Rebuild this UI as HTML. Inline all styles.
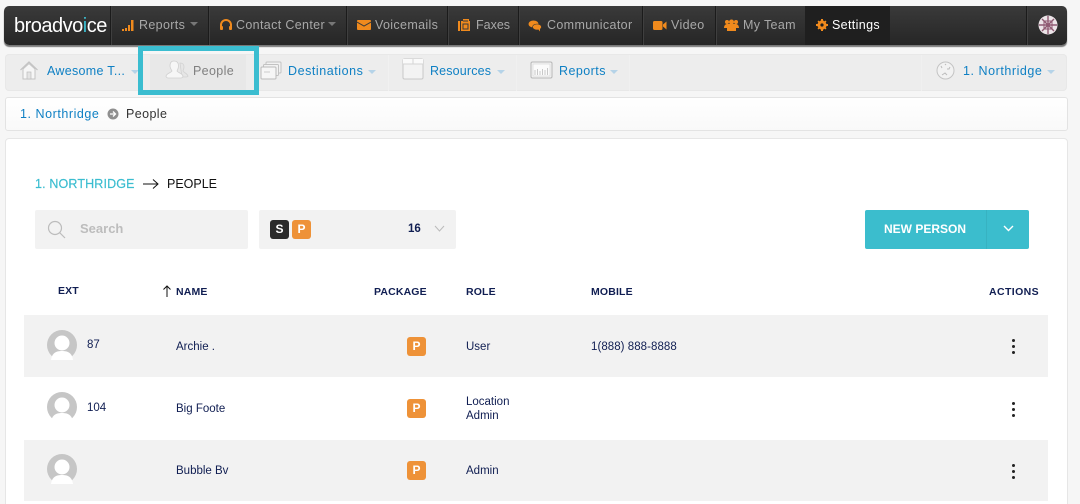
<!DOCTYPE html>
<html>
<head>
<meta charset="utf-8">
<style>
html,body{margin:0;padding:0;background:#f6f6f6;width:1080px;height:504px;overflow:hidden;}
#w{width:1080px;height:504px;position:relative;overflow:hidden;font-family:"Liberation Sans",sans-serif;}
.a{position:absolute;white-space:nowrap;}
#top{position:absolute;left:4px;top:6px;width:1063px;height:39px;background:linear-gradient(#3a3a3a,#262626);border-radius:5px;box-shadow:0 2px 1px #777;}
.sep{position:absolute;top:6px;width:1px;height:39px;background:#1b1b1b;box-shadow:1px 0 0 #3f3f3f;}
.t{position:absolute;top:17px;font-size:12.5px;line-height:16px;color:#a8a8a8;white-space:nowrap;letter-spacing:.35px;}
.car{position:absolute;width:0;height:0;border-left:4px solid transparent;border-right:4px solid transparent;}
.car.d{border-top:4px solid #777;top:22px;}
.car.b{border-top:4px solid #b5d3e8;top:70px;}
.s{position:absolute;top:63px;font-size:12.5px;line-height:16px;color:#0f80c4;white-space:nowrap;letter-spacing:.4px;}
.hd{position:absolute;font-size:10.5px;font-weight:bold;line-height:12px;color:#101e52;white-space:nowrap;letter-spacing:.15px;}
.c{position:absolute;font-size:11.5px;line-height:14px;color:#101e52;white-space:nowrap;}
.row{position:absolute;left:24px;width:1024px;background:#f2f2f2;}
.p{position:absolute;width:19px;height:19px;background:#ee9238;border-radius:3px;color:#fff;font-weight:bold;font-size:12px;line-height:19px;text-align:center;}
.dots{position:absolute;left:1012px;width:3px;}
.dots i{display:block;width:3px;height:3px;border-radius:50%;background:#222;margin-bottom:2.8px;}
svg{position:absolute;overflow:hidden;}
</style>
</head>
<body>
<div id="w">
<div id="top"></div>
<div class="a" style="left:805px;top:6px;width:85px;height:39px;background:#1f1f1f;"></div>
<div class="sep" style="left:110px"></div>
<div class="sep" style="left:208px"></div>
<div class="sep" style="left:346px"></div>
<div class="sep" style="left:447px"></div>
<div class="sep" style="left:518px"></div>
<div class="sep" style="left:642px"></div>
<div class="sep" style="left:715px"></div>
<div class="sep" style="left:1026px"></div>

<div class="a" style="left:14px;top:13px;font-size:20px;line-height:26px;color:#fff;letter-spacing:-.5px;">broadvo<span style="color:#3bbdd0">i</span>ce</div>

<svg style="left:121px;top:18px" width="14" height="14"><path d="M1 11h2v2H1zM4 10h2v3H4zM7 7h2v6H7zM10 2h2.500v11H10z" fill="#f08a1d"/></svg>
<div class="t" style="left:139px">Reports</div><div class="car d" style="left:190px"></div>

<svg style="left:219px;top:18px" width="14" height="14"><path d="M2 9V7a5 5 0 0 1 10 0v2" fill="none" stroke="#f08a1d" stroke-width="2"/><rect x="1" y="8" width="3" height="4" rx="1" fill="#f08a1d"/><rect x="10" y="8" width="3" height="4" rx="1" fill="#f08a1d"/></svg>
<div class="t" style="left:236px">Contact Center</div><div class="car d" style="left:328px"></div>

<svg style="left:357px;top:19px" width="14" height="12"><rect x="0" y="1" width="14" height="10" rx="1" fill="#f08a1d"/><path d="M0 3l7 4 7-4" fill="none" stroke="#3a3a3a" stroke-width="1"/></svg>
<div class="t" style="left:375px">Voicemails</div>

<svg style="left:457px;top:18px" width="14" height="14"><path d="M1 3h2v10H1zM4 3h2V1h6v2h1v10H4z" fill="#f08a1d"/><path d="M6 3h5M6 6h5v5H6z" fill="none" stroke="#3a3a3a" stroke-width="1"/></svg>
<div class="t" style="left:476px;letter-spacing:0">Faxes</div>

<svg style="left:528px;top:19px" width="14" height="13"><ellipse cx="5.500" cy="5" rx="5" ry="3.500" fill="#f08a1d"/><ellipse cx="9" cy="8" rx="4.500" ry="3" fill="#f08a1d" stroke="#333" stroke-width=".6"/><path d="M10 10l2 2.500v-3z" fill="#f08a1d"/></svg>
<div class="t" style="left:547px">Communicator</div>

<svg style="left:653px;top:20px" width="14" height="11"><rect x="0" y="1" width="9.500" height="9" rx="1.500" fill="#f08a1d"/><path d="M10 4.500l3.500-3v8l-3.500-3z" fill="#f08a1d"/></svg>
<div class="t" style="left:671px">Video</div>

<svg style="left:724px;top:18px" width="15" height="14"><circle cx="3" cy="4" r="2" fill="#f08a1d"/><circle cx="12" cy="4" r="2" fill="#f08a1d"/><circle cx="7.500" cy="4" r="2.500" fill="#f08a1d"/><path d="M0 10c0-3 2-4 3-4h9c1 0 3 1 3 4h-3v3H3v-3z" fill="#f08a1d"/></svg>
<div class="t" style="left:743px">My Team</div>

<svg style="left:816px;top:19px" width="12" height="12"><circle cx="6" cy="6" r="4.600" fill="#f08a1d"/><circle cx="6" cy="6" r="1.600" fill="#1f1f1f"/><path d="M5 0h2v2H5zM5 10h2v2H5zM0 5h2v2H0zM10 5h2v2h-2zM1.500 2.500l1-1 1.500 1.500-1 1zM9.500 1.500l1 1-1.500 1.500-1-1zM1.500 9.500l1 1 1.500-1.500-1-1zM10.500 9.500l-1 1-1.500-1.500 1-1z" fill="#f08a1d"/></svg>
<div class="t" style="left:832px;color:#fff">Settings</div>

<svg style="left:1038px;top:15px" width="20" height="20"><circle cx="10" cy="10" r="9.500" fill="#ece4e8"/><path d="M10 1v18M1 10h18M4 4l12 12M16 4L4 16" stroke="#8f5a72" stroke-width="1.400"/><path d="M6 6h8v8H6z" fill="none" stroke="#8f5a72" stroke-width="1"/></svg>

<!-- sub nav -->
<div class="a" style="left:5px;top:54px;width:1062px;height:37px;background:#ededed;border-radius:4px;box-shadow:inset 0 0 0 1px #e8e8e8;"></div>
<div class="a" style="left:150px;top:55px;width:96px;height:36px;background:#e8e8e8;"></div>
<div class="a" style="left:388px;top:55px;width:1px;height:36px;background:#f1f1f1;"></div>
<div class="a" style="left:516px;top:55px;width:1px;height:36px;background:#f0f0f0;"></div>
<div class="a" style="left:629px;top:55px;width:1px;height:36px;background:#f0f0f0;"></div>
<div class="a" style="left:921px;top:55px;width:1px;height:36px;background:#f0f0f0;"></div>

<svg style="left:19px;top:60px" width="20" height="20"><path d="M1.500 10L10 2l8.500 8" fill="none" stroke="#c2c2c2" stroke-width="1.200"/><path d="M4 9v10h12V9L10 3.500z" fill="#f6f6f6" stroke="#c4c4c4"/><rect x="8" y="12" width="4" height="7" fill="#e4e4e4" stroke="#bdbdbd" stroke-width=".7"/></svg>
<div class="s" style="left:47px;letter-spacing:.3px">Awesome T...</div><div class="car b" style="left:131px"></div>

<svg style="left:165px;top:60px" width="24" height="20"><path d="M15 3c3 0 4 2 4 4 0 2-1 3-1 4 1 2 4 2 5 5 0 1-1 1-2 1h-4z" fill="#e6e6e6" stroke="#d2d2d2" stroke-width=".8"/><path d="M9 1c3 0 4.500 2 4.500 5 0 2-1 4-1.500 5 1 2 5 2 6 5 0 1-1 2-2 2H3c-1 0-2-1-2-2 1-3 5-3 6-5-.5-1-2-3-2-5 0-3 1-5 4-5z" fill="#f6f6f6" stroke="#cfcfcf" stroke-width=".8"/></svg>
<div class="s" style="left:193px;color:#808080;letter-spacing:.35px">People</div>

<svg style="left:260px;top:61px" width="22" height="19"><rect x="6" y="1" width="15" height="11" rx="1" fill="#f2f2f2" stroke="#c2c2c2"/><rect x="3.500" y="3.500" width="15" height="11" rx="1" fill="#f2f2f2" stroke="#c2c2c2"/><rect x="1" y="6" width="15" height="12" rx="1" fill="#f6f6f6" stroke="#bbb"/><path d="M4 11h6" stroke="#ccc"/></svg>
<div class="s" style="left:288px;letter-spacing:.55px">Destinations</div><div class="car b" style="left:368px"></div>

<svg style="left:402px;top:58px" width="22" height="22"><rect x="1" y="1" width="20" height="20" rx="1.500" fill="#f3f3f3" stroke="#c8c8c8"/><path d="M1 1h20v5H1z" fill="#fafafa"/><path d="M1 6h20M11 1v5" stroke="#d4d4d4"/></svg>
<div class="s" style="left:430px;letter-spacing:.15px">Resources</div><div class="car b" style="left:497px"></div>

<svg style="left:530px;top:61px" width="23" height="18"><rect x="1" y="1" width="21" height="16" rx="1.500" fill="#f4f4f4" stroke="#b6b6b6"/><rect x="3" y="3" width="17" height="12" fill="#fbfbfb" stroke="#d4d4d4" stroke-width=".6"/><path d="M5 14V9M7.500 14V8M10 14v-4M12.500 14V8M15 14V9M17.500 14V7" stroke="#c8c8c8"/></svg>
<div class="s" style="left:559px;letter-spacing:.45px">Reports</div><div class="car b" style="left:610px"></div>

<svg style="left:936px;top:61px" width="19" height="19"><circle cx="9.500" cy="9.500" r="8.500" fill="#f2f2f2" stroke="#c4c4c4"/><path d="M5 5l1 2M9 3l1 1M14 6l-1 2-2 0M6 14l3-2 2 2" stroke="#bbb" fill="none"/></svg>
<div class="s" style="left:963px;letter-spacing:.55px">1. Northridge</div><div class="car b" style="left:1047px"></div>

<!-- highlight -->
<div class="a" style="left:138px;top:46px;width:111px;height:39px;border:5px solid #3bbdd0;"></div>

<!-- breadcrumb -->
<div class="a" style="left:5px;top:97px;width:1061px;height:32px;background:linear-gradient(#fff,#f9f9f9);border:1px solid #e3e3e3;border-radius:3px;"></div>
<div class="s" style="left:20px;top:106px;color:#0f80c4;letter-spacing:.55px">1. Northridge</div>
<svg style="left:107px;top:108px" width="12" height="12"><circle cx="6" cy="6" r="5.500" fill="#8f8f8f"/><path d="M3 6h5M6 3.500L8.500 6 6 8.500" fill="none" stroke="#fff" stroke-width="1.300"/></svg>
<div class="s" style="left:126px;top:106px;color:#333">People</div>

<!-- card -->
<div class="a" style="left:5px;top:138px;width:1061px;height:380px;background:#fff;border:1px solid #e6e6e6;border-radius:4px;"></div>

<div class="a" style="left:35px;top:176px;font-size:12.5px;line-height:16px;color:#3bbdd0;letter-spacing:.15px;-webkit-text-stroke:.2px #3bbdd0;">1. NORTHRIDGE</div>
<svg style="left:143px;top:178px" width="16" height="12"><path d="M0 6h15M10 1.500L15 6l-5 4.500" fill="none" stroke="#111" stroke-width="1"/></svg>
<div class="a" style="left:167px;top:176px;font-size:12.5px;line-height:16px;color:#111;">PEOPLE</div>

<div class="a" style="left:35px;top:210px;width:213px;height:39px;background:#f2f2f2;border-radius:2px;"></div>
<svg style="left:47px;top:220px" width="20" height="20"><circle cx="8" cy="8" r="6.500" fill="none" stroke="#bcbcbc" stroke-width="1.200"/><path d="M12.500 12.500L18 18" stroke="#bcbcbc" stroke-width="1.200"/></svg>
<div class="a" style="left:80px;top:221px;font-size:13px;line-height:16px;font-weight:bold;color:#bdbdbd;">Search</div>

<div class="a" style="left:259px;top:210px;width:197px;height:39px;background:#f2f2f2;border-radius:2px;"></div>
<div class="p" style="left:270px;top:220px;background:#2b2b2b;">S</div>
<div class="p" style="left:292px;top:220px;">P</div>
<div class="a" style="left:408px;top:222px;font-size:11.5px;line-height:14px;font-weight:bold;color:#101e52;">16</div>
<svg style="left:434px;top:225px" width="11" height="8"><path d="M1 1l4.500 5L10 1" fill="none" stroke="#bbb" stroke-width="1"/></svg>

<div class="a" style="left:865px;top:210px;width:164px;height:39px;background:#3bbdcd;border-radius:2px;"></div>
<div class="a" style="left:986px;top:210px;width:1px;height:39px;background:#37b2c1;"></div>
<div class="a" style="left:884px;top:221px;font-size:12px;line-height:16px;font-weight:bold;color:#fff;">NEW PERSON</div>
<svg style="left:1003px;top:225px" width="11" height="8"><path d="M1 1l4.500 4.500L10 1" fill="none" stroke="#fff" stroke-width="1.400"/></svg>

<!-- headers -->
<div class="hd" style="left:58px;top:285px">EXT</div>
<svg style="left:162px;top:285px" width="10" height="12"><path d="M5 12V1M1.500 4.500L5 1l3.500 3.500" fill="none" stroke="#111" stroke-width="1"/></svg>
<div class="hd" style="left:176px;top:286px">NAME</div>
<div class="hd" style="left:374px;top:286px">PACKAGE</div>
<div class="hd" style="left:466px;top:286px">ROLE</div>
<div class="hd" style="left:591px;top:286px">MOBILE</div>
<div class="hd" style="left:989px;top:286px;letter-spacing:.4px">ACTIONS</div>

<!-- rows -->
<div class="row" style="top:315px;height:62px;"></div>
<div class="row" style="top:440px;height:61px;"></div>

<svg style="left:47px;top:330px" width="30" height="30"><circle cx="15" cy="15" r="15" fill="#c6c6c6"/><circle cx="15" cy="13" r="7.500" fill="#fff"/><path d="M4 30c1-7 5-9 11-9s10 2 11 9z" fill="#fff"/></svg>
<div class="c" style="left:87px;top:338px">87</div>
<div class="c" style="left:176px;top:340px">Archie .</div>
<div class="p" style="left:407px;top:337px">P</div>
<div class="c" style="left:466px;top:340px">User</div>
<div class="c" style="left:591px;top:340px;letter-spacing:.05px">1(888) 888-8888</div>
<div class="dots" style="top:339px"><i></i><i></i><i></i></div>

<svg style="left:47px;top:392px" width="30" height="30"><circle cx="15" cy="15" r="15" fill="#c6c6c6"/><circle cx="15" cy="13" r="7.500" fill="#fff"/><path d="M4 30c1-7 5-9 11-9s10 2 11 9z" fill="#fff"/></svg>
<div class="c" style="left:87px;top:401px">104</div>
<div class="c" style="left:176px;top:402px">Big Foote</div>
<div class="p" style="left:407px;top:399px">P</div>
<div class="c" style="left:466px;top:395px">Location<br>Admin</div>
<div class="dots" style="top:402px"><i></i><i></i><i></i></div>

<svg style="left:47px;top:454px" width="30" height="30"><circle cx="15" cy="15" r="15" fill="#c6c6c6"/><circle cx="15" cy="13" r="7.500" fill="#fff"/><path d="M4 30c1-7 5-9 11-9s10 2 11 9z" fill="#fff"/></svg>
<div class="c" style="left:176px;top:464px">Bubble Bv</div>
<div class="p" style="left:407px;top:461px">P</div>
<div class="c" style="left:466px;top:464px">Admin</div>
<div class="dots" style="top:464px"><i></i><i></i><i></i></div>
</div>
</body>
</html>
